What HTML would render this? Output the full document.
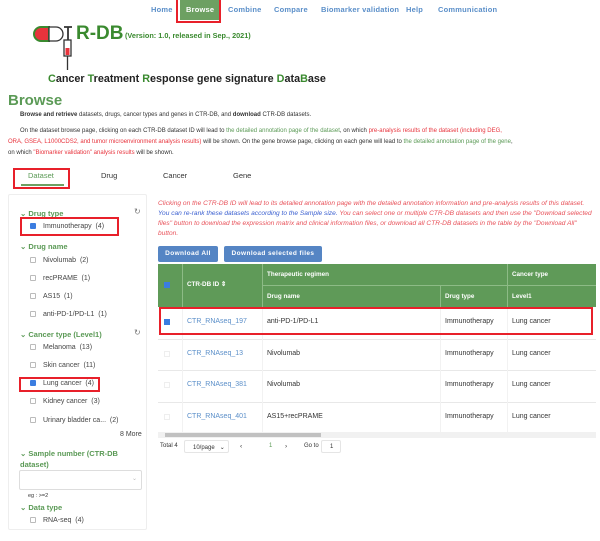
<!DOCTYPE html>
<html><head><meta charset="utf-8"><style>
*{margin:0;padding:0;box-sizing:border-box}
body{width:600px;height:541px;background:#fff;font-family:"Liberation Sans",sans-serif;position:relative;overflow:hidden;color:#333}
.a{position:absolute;white-space:nowrap}
.nav{top:5px;font-size:7.5px;font-weight:bold;color:#5b8fc9;letter-spacing:.2px}
.g{color:#5b9a56}.r{color:#e8333c}.G{color:#3a8a2f}
.p{font-size:6px;color:#333}
.sb{font-size:7px;color:#444}
.sh{font-size:7.5px;color:#5b9a56;font-weight:bold}
.cb{display:inline-block;width:6px;height:6px;border:1px solid #bbb;border-radius:1px;vertical-align:-1px;margin-right:7px;background:#fff}
.cbc{background:#3b7de0;border-color:#3b7de0}
.box{position:absolute;border:2px solid #e8202a}
.th{position:absolute;font-size:6.3px;color:#fff;font-weight:bold}
.td{position:absolute;font-size:7px;color:#333}
.lk{color:#5b8fc9}
.hl{position:absolute;background:#e8e8e8}
.it{position:absolute;white-space:nowrap;font-size:6.6px;font-style:italic;color:#e8525a}
</style></head><body>
<div class="a nav" style="left:151px">Home</div>
<div class="a" style="left:180px;top:0;width:40px;height:20px;background:#6da062"></div>
<div class="a nav" style="left:186px;color:#fff">Browse</div>
<div class="box" style="left:176px;top:-2px;width:45px;height:25px"></div>
<div class="a nav" style="left:228px">Combine</div>
<div class="a nav" style="left:274px">Compare</div>
<div class="a nav" style="left:321px">Biomarker validation</div>
<div class="a nav" style="left:406px">Help</div>
<div class="a nav" style="left:438px">Communication</div>

<svg class="a" style="left:30px;top:24px" width="50" height="50" viewBox="0 0 50 50">
<path d="M11 3 A7 7 0 0 0 11 17 H19 V3Z" fill="#e8333c" stroke="#3a8a2f" stroke-width="2"/>
<path d="M19 3 H26 A7 7 0 0 1 26 17 H19Z" fill="#fff" stroke="#333" stroke-width="1.3"/>
<path d="M34 3 H42 M38 3 V16" stroke="#333" stroke-width="1.8" fill="none"/>
<rect x="34" y="16" width="7" height="16" fill="#fff" stroke="#333" stroke-width="1.3"/>
<rect x="35.5" y="24" width="4" height="7" fill="#e8333c"/>
<path d="M37.5 32 V46" stroke="#333" stroke-width="1.3"/>
</svg>
<div class="a G" style="left:76px;top:23px;font-size:19px;font-weight:bold">R-DB</div>
<div class="a G" style="left:125px;top:31px;font-size:7.3px;font-weight:bold">(Version: 1.0, released in Sep., 2021)</div>
<div class="a" style="left:48px;top:73px;font-size:10.8px;font-weight:bold;color:#222"><span class="G">C</span>ancer <span class="G">T</span>reatment <span class="G">R</span>esponse gene signature <span class="G">D</span>ata<span class="G">B</span>ase</div>
<div class="a g" style="left:8px;top:92px;font-size:15px;font-weight:bold">Browse</div>
<div class="a p" style="left:20px;top:112px"><b>Browse and retrieve</b> datasets, drugs, cancer types and genes in CTR-DB, and <b>download</b> CTR-DB datasets.</div>
<div class="a p" style="left:20px;top:128px">On the dataset browse page, clicking on each CTR-DB dataset ID will lead to <span class="g">the detailed annotation page of the dataset</span>, on which <span class="r">pre-analysis results of the dataset (including DEG,</span></div>
<div class="a p" style="left:8px;top:139px"><span class="r">ORA, GSEA, L1000CDS2, and tumor microenvironment analysis results)</span> will be shown. On the gene browse page, clicking on each gene will lead to <span class="g">the detailed annotation page of the gene</span>,</div>
<div class="a p" style="left:8px;top:150px">on which <span class="r">"Biomarker validation" analysis results</span> will be shown.</div>

<div class="a g" style="left:28px;top:171px;font-size:7.5px">Dataset</div>
<div class="a" style="left:21px;top:184px;width:43px;height:1.5px;background:#6da062"></div>
<div class="box" style="left:13px;top:168px;width:57px;height:21px"></div>
<div class="a" style="left:101px;top:171px;font-size:7.5px">Drug</div>
<div class="a" style="left:163px;top:171px;font-size:7.5px">Cancer</div>
<div class="a" style="left:233px;top:171px;font-size:7.5px">Gene</div>

<div class="a" style="left:8px;top:194px;width:139px;height:336px;border:1px solid #eee;border-radius:2px"></div>
<div class="a sh" style="left:20px;top:209px">⌄ Drug type</div>
<div class="a" style="left:134px;top:207px;font-size:8px;color:#777">↻</div>
<div class="a sb" style="left:30px;top:223px"><span class="cb cbc"></span>Immunotherapy &nbsp;(4)</div>
<div class="box" style="left:20px;top:217px;width:99px;height:19px"></div>
<div class="a sh" style="left:20px;top:242px">⌄ Drug name</div>
<div class="a sb" style="left:30px;top:257px"><span class="cb"></span>Nivolumab &nbsp;(2)</div>
<div class="a sb" style="left:30px;top:275px"><span class="cb"></span>recPRAME &nbsp;(1)</div>
<div class="a sb" style="left:30px;top:293px"><span class="cb"></span>AS15 &nbsp;(1)</div>
<div class="a sb" style="left:30px;top:311px"><span class="cb"></span>anti-PD-1/PD-L1 &nbsp;(1)</div>
<div class="a sh" style="left:20px;top:330px">⌄ Cancer type (Level1)</div>
<div class="a" style="left:134px;top:328px;font-size:8px;color:#777">↻</div>
<div class="a sb" style="left:30px;top:344px"><span class="cb"></span>Melanoma &nbsp;(13)</div>
<div class="a sb" style="left:30px;top:362px"><span class="cb"></span>Skin cancer &nbsp;(11)</div>
<div class="a sb" style="left:30px;top:380px"><span class="cb cbc"></span>Lung cancer &nbsp;(4)</div>
<div class="box" style="left:19px;top:377px;width:81px;height:15px"></div>
<div class="a sb" style="left:30px;top:398px"><span class="cb"></span>Kidney cancer &nbsp;(3)</div>
<div class="a sb" style="left:30px;top:417px"><span class="cb"></span>Urinary bladder ca... &nbsp;(2)</div>
<div class="a sb" style="left:120px;top:431px">8 More</div>
<div class="a sh" style="left:20px;top:449px">⌄ Sample number (CTR-DB</div>
<div class="a sh" style="left:20px;top:460px">dataset)</div>
<div class="a" style="left:19px;top:470px;width:123px;height:20px;border:1px solid #ddd;border-radius:2px"></div>
<div class="a" style="left:132px;top:475px;font-size:6px;color:#bbb">⌄</div>
<div class="a" style="left:28px;top:493px;font-size:5.5px">eg : &gt;=2</div>
<div class="a sh" style="left:20px;top:503px">⌄ Data type</div>
<div class="a sb" style="left:30px;top:517px"><span class="cb"></span>RNA-seq &nbsp;(4)</div>

<div class="it" style="left:158px;top:200px">Clicking on the CTR-DB ID will lead to its detailed annotation page with the detailed annotation information and pre-analysis results of this dataset.</div>
<div class="it" style="left:158px;top:210px"><span style="color:#3a5fd0">You can re-rank these datasets according to the Sample size.</span> You can select one or multiple CTR-DB datasets and then use the "Download selected</div>
<div class="it" style="left:158px;top:220px">files" button to download the expression matrix and clinical information files, or download all CTR-DB datasets in the table by the "Download All"</div>
<div class="it" style="left:158px;top:230px">button.</div>
<div class="a" style="left:158px;top:246px;width:60px;height:16px;background:#5585c4;border-radius:2px;color:#fff;font-size:6.5px;font-weight:bold;text-align:center;line-height:16px;letter-spacing:.4px">Download All</div>
<div class="a" style="left:224px;top:246px;width:98px;height:16px;background:#5585c4;border-radius:2px;color:#fff;font-size:6.5px;font-weight:bold;text-align:center;line-height:16px;letter-spacing:.4px">Download selected files</div>

<div class="a" style="left:158px;top:264px;width:438px;height:43px;background:#5f9a58"></div>
<div class="a" style="left:182px;top:264px;width:1px;height:43px;background:#8dbb86"></div>
<div class="a" style="left:262px;top:264px;width:1px;height:43px;background:#8dbb86"></div>
<div class="a" style="left:507px;top:264px;width:1px;height:43px;background:#8dbb86"></div>
<div class="a" style="left:440px;top:286px;width:1px;height:21px;background:#8dbb86"></div>
<div class="a" style="left:262px;top:285px;width:334px;height:1px;background:#8dbb86"></div>
<div class="a" style="left:164px;top:282px;width:6px;height:6px;background:#3b7de0"></div>
<div class="th" style="left:187px;top:281px">CTR-DB ID ⇕</div>
<div class="th" style="left:267px;top:271px">Therapeutic regimen</div>
<div class="th" style="left:512px;top:271px">Cancer type</div>
<div class="th" style="left:267px;top:293px">Drug name</div>
<div class="th" style="left:445px;top:293px">Drug type</div>
<div class="th" style="left:512px;top:293px">Level1</div>

<div class="hl" style="left:158px;top:339px;width:438px;height:1px"></div>
<div class="hl" style="left:158px;top:370px;width:438px;height:1px"></div>
<div class="hl" style="left:158px;top:402px;width:438px;height:1px"></div>
<div class="hl" style="left:182px;top:307px;width:1px;height:125px;background:#f2f2f2"></div>
<div class="hl" style="left:262px;top:307px;width:1px;height:125px;background:#f2f2f2"></div>
<div class="hl" style="left:440px;top:307px;width:1px;height:125px;background:#f2f2f2"></div>
<div class="hl" style="left:507px;top:307px;width:1px;height:125px;background:#f2f2f2"></div>

<div class="a" style="left:164px;top:319px;width:6px;height:6px;background:#3b7de0"></div>
<div class="td lk" style="left:187px;top:318px">CTR_RNAseq_197</div>
<div class="td" style="left:267px;top:318px">anti-PD-1/PD-L1</div>
<div class="td" style="left:445px;top:318px">Immunotherapy</div>
<div class="td" style="left:512px;top:318px">Lung cancer</div>
<div class="box" style="left:159px;top:307px;width:434px;height:28px"></div>
<div class="a" style="left:164px;top:351px;width:6px;height:6px;border:1px solid #eee"></div>
<div class="td lk" style="left:187px;top:350px">CTR_RNAseq_13</div>
<div class="td" style="left:267px;top:350px">Nivolumab</div>
<div class="td" style="left:445px;top:350px">Immunotherapy</div>
<div class="td" style="left:512px;top:350px">Lung cancer</div>
<div class="a" style="left:164px;top:382px;width:6px;height:6px;border:1px solid #eee"></div>
<div class="td lk" style="left:187px;top:381px">CTR_RNAseq_381</div>
<div class="td" style="left:267px;top:381px">Nivolumab</div>
<div class="td" style="left:445px;top:381px">Immunotherapy</div>
<div class="td" style="left:512px;top:381px">Lung cancer</div>
<div class="a" style="left:164px;top:414px;width:6px;height:6px;border:1px solid #eee"></div>
<div class="td lk" style="left:187px;top:413px">CTR_RNAseq_401</div>
<div class="td" style="left:267px;top:413px">AS15+recPRAME</div>
<div class="td" style="left:445px;top:413px">Immunotherapy</div>
<div class="td" style="left:512px;top:413px">Lung cancer</div>

<div class="a" style="left:158px;top:432px;width:438px;height:6px;background:#f1f1f1"></div>
<div class="a" style="left:165px;top:433px;width:156px;height:4px;background:#c1c1c1"></div>
<div class="a" style="left:160px;top:443px;font-size:6px">Total 4</div>
<div class="a" style="left:184px;top:440px;width:45px;height:13px;border:1px solid #e5e5e5;border-radius:2px;font-size:6px;padding:3px 0 0 8px">10/page &nbsp; ⌄</div>
<div class="a" style="left:240px;top:443px;font-size:6.5px">‹</div>
<div class="a g" style="left:269px;top:443px;font-size:6px">1</div>
<div class="a" style="left:285px;top:443px;font-size:6.5px">›</div>
<div class="a" style="left:304px;top:443px;font-size:6px">Go to</div>
<div class="a" style="left:321px;top:440px;width:20px;height:13px;border:1px solid #e5e5e5;border-radius:2px;font-size:6px;padding:3px 0 0 8px">1</div>
</body></html>
